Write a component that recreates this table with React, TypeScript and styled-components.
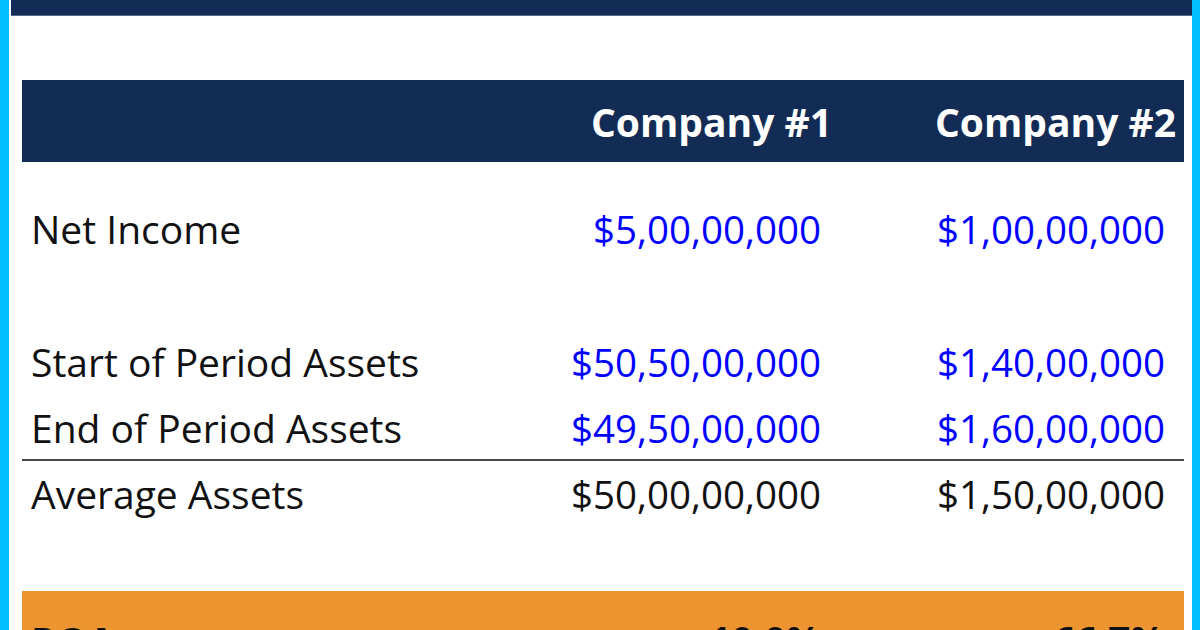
import React from 'react';
import styled, { createGlobalStyle } from 'styled-components';

const GlobalStyle = createGlobalStyle`
  html, body {
    margin: 0;
    padding: 0;
    background: #ffffff;
  }
  body {
    font-family: 'Open Sans', 'Liberation Sans', sans-serif;
  }
`;

const Frame = styled.div`
  width: 1200px;
  height: 630px;
  overflow: hidden;
  box-sizing: border-box;
  border-left: 9px solid #04bfff;
  border-right: 8px solid #04bfff;
  background: #ffffff;
`;

const TopBar = styled.div`
  height: 15px;
  margin: 0 0 0 2px;
  background: #132c55;
  border-bottom: 1px solid #5a6d8c;
`;

const Table = styled.div`
  margin: 64px 7px 0 13px;
  display: grid;
  grid-template-columns: 538px 280px 344px;
`;

const HeaderCell = styled.div<{ $pad?: number }>`
  height: 82px;
  background: #132c55;
  color: #ffffff;
  font-weight: 700;
  font-size: 39px;
  display: flex;
  align-items: center;
  justify-content: flex-end;
  white-space: nowrap;
  padding-right: ${p => p.$pad ?? 0}px;
`;

const Spacer = styled.div<{ $h: number }>`
  grid-column: 1 / -1;
  height: ${p => p.$h}px;
`;

const Cell = styled.div<{ $align?: 'left' | 'right'; $blue?: boolean; $line?: boolean }>`
  height: 66px;
  line-height: 66px;
  font-size: ${p => (p.$align === 'left' ? 39 : 38.5)}px;
  color: ${p => (p.$blue ? '#0000ff' : '#111111')};
  text-align: ${p => p.$align ?? 'right'};
  padding: ${p => (p.$align === 'left' ? '0 0 0 9px' : '0 19px 0 0')};
  white-space: nowrap;
  box-sizing: border-box;
  border-bottom: ${p => (p.$line ? '2px solid #4a4a4a' : 'none')};
`;

const TotalCell = styled(Cell)`
  background: #ec942f;
  font-weight: 700;
  height: 80px;
  line-height: 1;
  padding-top: 30px;
`;

type Row = {
  label: string;
  c1: string;
  c2: string;
  blue?: boolean;
  line?: boolean;
};

const rows: (Row | null)[] = [
  { label: 'Net Income', c1: '$5,00,00,000', c2: '$1,00,00,000', blue: true },
  null,
  { label: 'Start of Period Assets', c1: '$50,50,00,000', c2: '$1,40,00,000', blue: true },
  { label: 'End of Period Assets', c1: '$49,50,00,000', c2: '$1,60,00,000', blue: true, line: true },
  { label: 'Average Assets', c1: '$50,00,00,000', c2: '$1,50,00,000' },
];

const App: React.FC = () => {
  return (
    <Frame>
      <GlobalStyle />
      <TopBar />
      <Table>
        <HeaderCell />
        <HeaderCell $pad={8}>Company #1</HeaderCell>
        <HeaderCell $pad={8}>Company #2</HeaderCell>
        <Spacer $h={34} />
        {rows.map((r, i) =>
          r ? (
            <React.Fragment key={i}>
              <Cell $align="left" $line={r.line}>{r.label}</Cell>
              <Cell $blue={r.blue} $line={r.line}>{r.c1}</Cell>
              <Cell $blue={r.blue} $line={r.line}>{r.c2}</Cell>
            </React.Fragment>
          ) : (
            <Spacer key={i} $h={67} />
          )
        )}
        <Spacer $h={64} />
        <TotalCell $align="left">ROA</TotalCell>
        <TotalCell>10.0%</TotalCell>
        <TotalCell>66.7%</TotalCell>
      </Table>
    </Frame>
  );
};

export default App;
